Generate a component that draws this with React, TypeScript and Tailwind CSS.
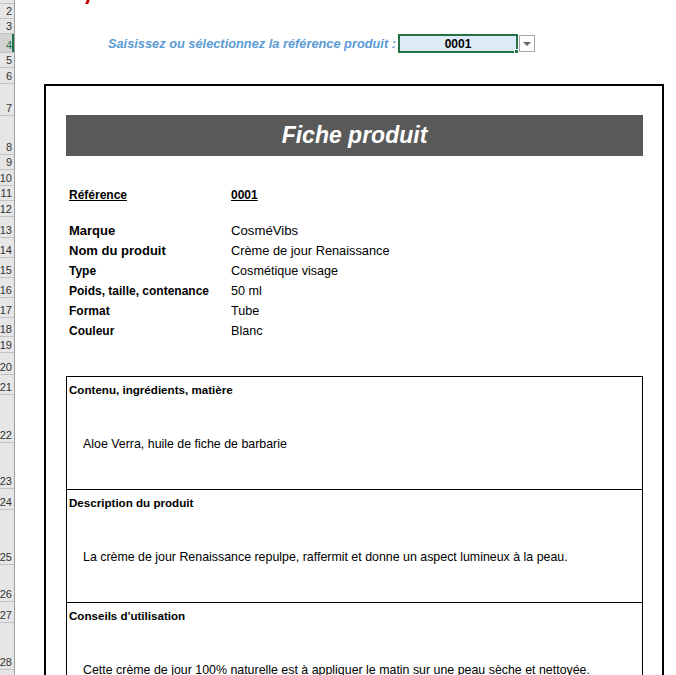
const ROWS: [number, number][] = [
  [1, 4], [2, 15], [3, 15], [4, 19], [5, 15], [6, 16], [7, 32], [8, 39], [9, 15], [10, 16],
  [11, 15], [12, 16], [13, 21], [14, 20], [15, 20], [16, 20], [17, 20], [18, 19], [19, 16],
  [20, 22], [21, 20], [22, 48], [23, 46], [24, 21], [25, 55], [26, 37], [27, 21], [28, 47], [29, 20],
];

const FIELDS = [
  { label: 'Marque', value: 'CosméVibs', labelSize: 'text-[13px]', valueSize: 'text-[13.2px]' },
  { label: 'Nom du produit', value: 'Crème de jour Renaissance', labelSize: 'text-[13px]', valueSize: 'text-[12.8px]' },
  { label: 'Type', value: 'Cosmétique visage', labelSize: 'text-[12px]', valueSize: 'text-[12.6px]' },
  { label: 'Poids, taille, contenance', value: '50 ml', labelSize: 'text-[12px]', valueSize: 'text-[12.6px]' },
  { label: 'Format', value: 'Tube', labelSize: 'text-[12px]', valueSize: 'text-[12.6px]' },
  { label: 'Couleur', value: 'Blanc', labelSize: 'text-[12px]', valueSize: 'text-[12.6px]' },
];

const BLOCKS = [
  { title: 'Contenu, ingrédients, matière', text: 'Aloe Verra, huile de fiche de barbarie' },
  { title: 'Description du produit', text: 'La crème de jour Renaissance repulpe, raffermit et donne un aspect lumineux à la peau.' },
  { title: "Conseils d'utilisation", text: 'Cette crème de jour 100% naturelle est à appliquer le matin sur une peau sèche et nettoyée.' },
];

function RowHeaders() {
  return (
    <div className="flex w-[15px] shrink-0 flex-col border-r border-[#9f9f9f] bg-[#e6e6e6]">
      {ROWS.map(([n, h]) => {
        const active = n === 4;
        return (
          <div
            key={n}
            style={{ height: h }}
            className={`flex shrink-0 items-end justify-end overflow-hidden whitespace-nowrap border-b border-[#c3c3c3] pr-[2px] text-[11px] leading-[14px] ${
              active ? 'bg-[#d3d3d3] text-[#217346] shadow-[inset_-2px_0_0_#217346]' : 'text-[#333]'
            }`}
          >
            {n}
          </div>
        );
      })}
    </div>
  );
}

export default function App() {
  return (
    <div className="flex h-[675px] w-[676px] overflow-hidden bg-white font-['Liberation_Sans',Arial,sans-serif] text-black">
      <RowHeaders />

      <div className="flex-1">
        <div className="h-[34px]">
          <div className="ml-[71px] h-[4px] w-[3px] -skew-x-[20deg] bg-[#c00000]" />
        </div>

        <div className="flex h-[19px] items-center">
          <div className="w-[383px] pr-[2px] text-right text-[12.8px] font-bold italic text-[#5b9bd5]">
            Saisissez ou sélectionnez la référence produit :
          </div>
          <div className="relative flex h-[19px] w-[120px] items-center justify-center border-2 border-[#217346] bg-[#ddebf7] text-[12px] font-bold">
            0001
            <span className="absolute -bottom-[3px] -right-[3px] h-[5px] w-[5px] border border-white bg-[#217346]" />
          </div>
          <div className="ml-px flex h-[17px] w-[16px] items-center justify-center border border-[#a6a6a6] bg-white">
            <span className="h-0 w-0 border-x-[4px] border-t-[4px] border-x-transparent border-t-[#666]" />
          </div>
        </div>

        <div className="h-[31px]" />

        <div className="ml-[29px] h-[620px] w-[620px] border-2 border-b-0 border-black pl-[20px] pr-[19px] pt-[29px]">
          <div className="flex h-[41px] items-center justify-center bg-[#595959] text-[23px] font-bold italic text-white">
            Fiche produit
          </div>

          <div className="mt-[29px] grid h-[20px] grid-cols-[162px_1fr] items-center pl-[3px] text-[12px] font-bold underline">
            <span>Référence</span>
            <span>0001</span>
          </div>

          <div className="mt-[16px]">
            {FIELDS.map((f) => (
              <div key={f.label} className="grid h-[20px] grid-cols-[162px_1fr] items-center pl-[3px]">
                <span className={`font-bold ${f.labelSize}`}>{f.label}</span>
                <span className={f.valueSize}>{f.value}</span>
              </div>
            ))}
          </div>

          <div className="mt-[35px] border-x border-black">
            {BLOCKS.map((b) => (
              <div key={b.title} className="h-[113px] border-t border-black">
                <div className="pl-[2px] pt-[3px] text-[11.6px] font-bold leading-[20px]">{b.title}</div>
                <div className="mt-[34px] pl-[16px] text-[12.4px] leading-[20px]">{b.text}</div>
              </div>
            ))}
          </div>
        </div>
      </div>
    </div>
  );
}
